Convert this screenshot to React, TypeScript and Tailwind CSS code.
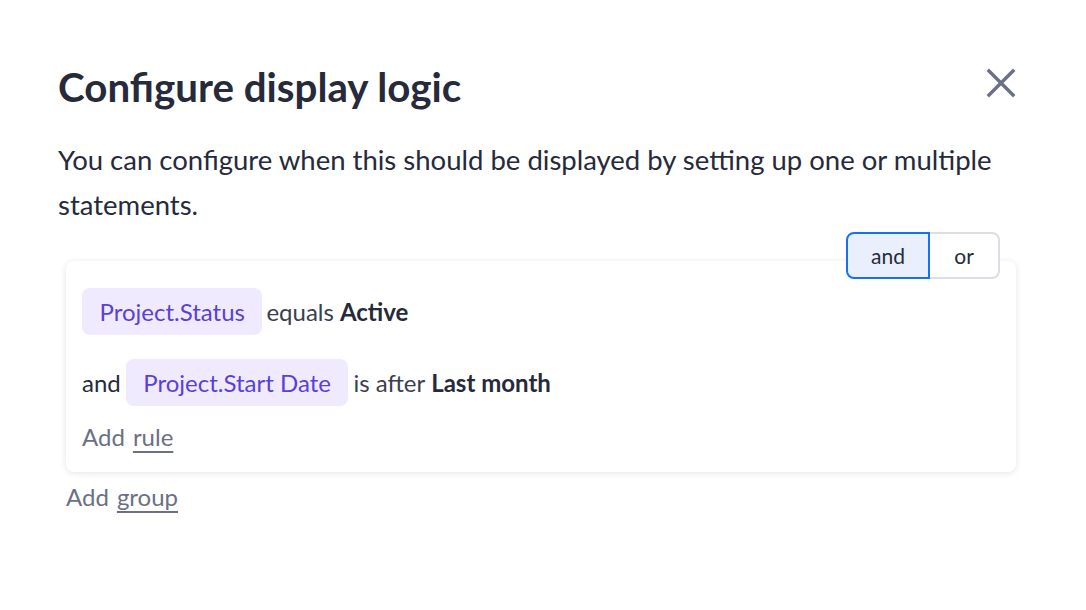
import React from 'react';

function Pill({ children }: { children: React.ReactNode }) {
  return (
    <span className="inline-flex h-[47px] items-center rounded-lg bg-[#efeafd] px-[17.5px] text-[24px] text-[#5a3fd8]">
      {children}
    </span>
  );
}

export default function App() {
  return (
    <div className="min-h-[610px] w-[1086px] bg-white font-['Lato',sans-serif] text-[#262a3a]">
      <div className="px-[58px] pt-[62px]">
        <div className="flex items-start justify-between">
          <h1 className="text-[40.3px] font-bold leading-[50px]">Configure display logic</h1>
          <button className="mr-[12px] mt-[6px] text-[#6b7086]" aria-label="Close">
            <svg width="30" height="30" viewBox="0 0 30 30" fill="none" stroke="currentColor" strokeWidth="3.4" strokeLinecap="square">
              <path d="M3 3 L27 27 M27 3 L3 27" />
            </svg>
          </button>
        </div>

        <p className="mt-[25px] text-[27.5px] leading-[45px] text-[#262a3a]">
          You can configure when this should be displayed by setting up one or multiple statements.
        </p>

        <div className="relative ml-[8px] mt-[34px] w-[950px] rounded-lg bg-white px-4 pb-[18px] pt-[27px] shadow-[0_1px_6px_rgba(30,35,60,0.12)]">
          <div className="absolute right-4 top-[-29px] flex h-[47px] text-[21px]">
            <button className="w-[84px] rounded-l-lg border-2 border-[#1672f3] bg-[#e9effd] text-[#262a3a]">and</button>
            <button className="w-[70px] rounded-r-lg border-2 border-l-0 border-[#dcdee4] bg-white text-[#262a3a]">or</button>
          </div>

          <div className="flex flex-col gap-[24px] text-[24px]">
            <div className="flex items-center">
              <Pill>Project.Status</Pill>
              <span className="ml-[4px] text-[#3b3f4e]">equals</span>
              <span className="ml-[6px] font-bold">Active</span>
            </div>
            <div className="flex items-center">
              <span className="text-[#262a3a]">and</span>
              <span className="ml-[5px]">
                <Pill>Project.Start Date</Pill>
              </span>
              <span className="ml-[5px] text-[#3b3f4e]">is after</span>
              <span className="ml-[6px] font-bold">Last month</span>
            </div>
          </div>

          <div className="mt-[14px] flex items-center gap-[8px] text-[24px] leading-[34px] text-[#6b7086]">
            <span>Add</span>
            <span className="underline underline-offset-[5px]">rule</span>
          </div>
        </div>

        <div className="ml-[8px] mt-[8px] flex items-center gap-[8px] text-[24px] leading-[34px] text-[#6b7086]">
          <span>Add</span>
          <span className="underline underline-offset-[5px]">group</span>
        </div>
      </div>
    </div>
  );
}
